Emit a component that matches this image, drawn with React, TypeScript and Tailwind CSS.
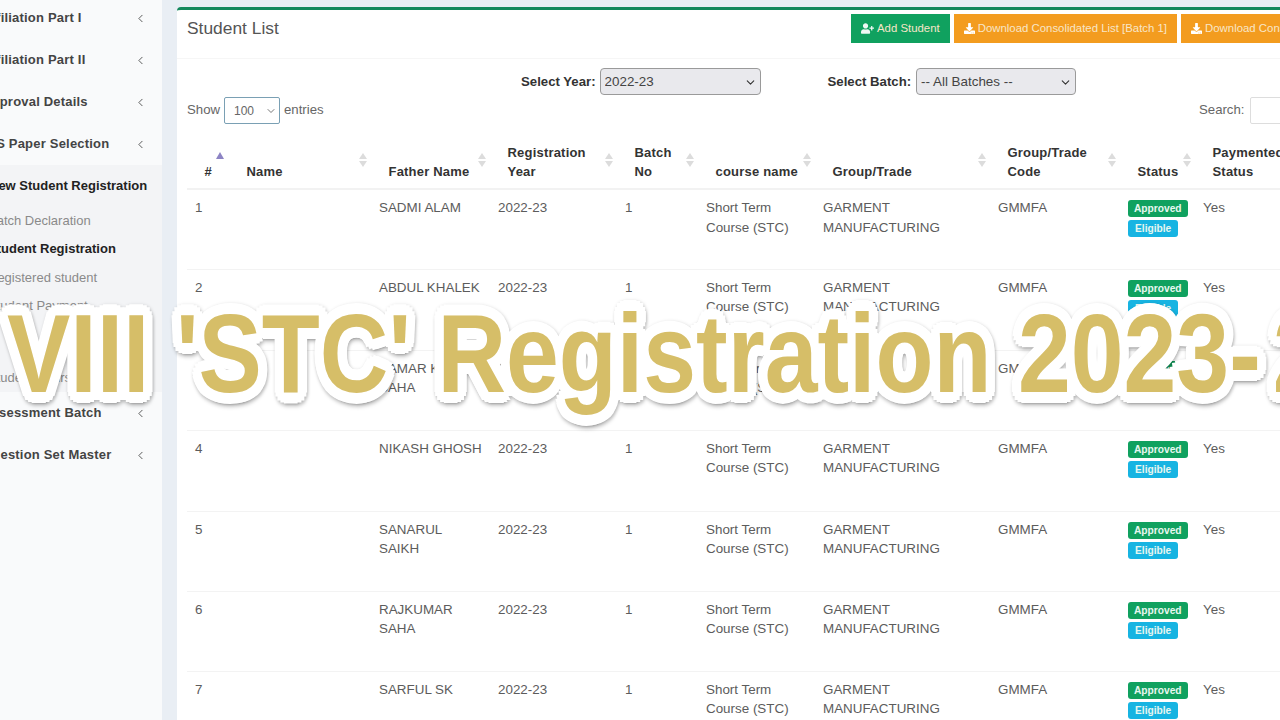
import { FaUserPlus, FaDownload } from "react-icons/fa";
import { ChevronLeft, ChevronDown } from "lucide-react";

const font = "font-['Liberation_Sans',Arial,sans-serif]";

const rows = [
  { n: 1, f: ["SADMI ALAM"], h: "h-[80px]" },
  { n: 2, f: ["ABDUL KHALEK"], h: "h-[81px]" },
  { n: 3, f: ["SAMAR KUMAR", "SAHA"], h: "h-[80px]" },
  { n: 4, f: ["NIKASH GHOSH"], h: "h-[81px]" },
  { n: 5, f: ["SANARUL", "SAIKH"], h: "h-[80px]" },
  { n: 6, f: ["RAJKUMAR", "SAHA"], h: "h-[80px]" },
  { n: 7, f: ["SARFUL SK"], h: "h-[80px]" },
];

const cols = [
  { w: "w-[42px]", t: ["#"] },
  { w: "w-[142px]", t: ["Name"], s: true },
  { w: "w-[119px]", t: ["Father Name"], s: true },
  { w: "w-[127px]", t: ["Registration", "Year"], s: true },
  { w: "w-[81px]", t: ["Batch", "No"], s: true },
  { w: "w-[117px]", t: ["course name"], s: true },
  { w: "w-[175px]", t: ["Group/Trade"], s: true },
  { w: "w-[130px]", t: ["Group/Trade", "Code"], s: true },
  { w: "w-[75px]", t: ["Status"], s: true },
  { w: "w-[110px]", t: ["Paymented", "Status"] },
];

function SortIcon() {
  return (
    <svg width="8" height="14" viewBox="0 0 8 14" className="absolute right-[4px] top-[15px]">
      <path d="M4 0 8 6H0Z" fill="#dcdcdc" />
      <path d="M4 14 8 8H0Z" fill="#dcdcdc" />
    </svg>
  );
}

function MenuItem({ label, pad }: { label: string; pad?: string }) {
  return (
    <div className="flex h-[42px] items-center justify-between pr-[15px] text-[13px] font-bold tracking-[0.2px] text-[#444]">
      <span className={`whitespace-nowrap ${pad ?? ""}`}>{label}</span>
      <ChevronLeft size={13} strokeWidth={1.6} className="shrink-0 text-[#444]" />
    </div>
  );
}

function Sidebar() {
  const sub = "flex h-[28.6px] items-center whitespace-nowrap text-[13px] text-[#8a8a8a]";
  return (
    <aside className="h-full w-[162px] shrink-0 overflow-hidden bg-[#f9fafb]">
      <div className="-mt-[3px] -ml-[18px] w-[180px]">
        <MenuItem label="Affiliation Part I" />
        <MenuItem label="Affiliation Part II" />
        <MenuItem label="Approval Details" />
        <MenuItem label="TS Paper Selection" pad="ml-[6px]" />
        <div className="h-[227px] bg-[#f3f4f6] pl-[7px]">
          <div className="flex h-[42px] items-center whitespace-nowrap text-[13px] font-bold text-[#222]">New Student Registration</div>
          <div className="-ml-[1px]">
            <div className={`${sub} mt-[-1px]`}>Batch Declaration</div>
            <div className={`${sub} font-bold text-[#222]`}>Student Registration</div>
            <div className={sub}>Registered student</div>
            <div className={sub}>Student Payment</div>
            <div className="h-[43px]" />
            <div className={sub}>Student Course</div>
          </div>
        </div>
        <MenuItem label="Assessment Batch" />
        <MenuItem label="Question Set Master" />
      </div>
    </aside>
  );
}

function Toolbar() {
  const btn = "flex h-[29px] shrink-0 items-center gap-[3px] whitespace-nowrap px-[10px] text-[11.4px] text-[#f8e6c8]";
  return (
    <div className="flex h-[49px] items-start border-b border-[#f6f6f6] pl-[10px]">
      <h1 className="mt-[5px] w-[664px] shrink-0 whitespace-nowrap text-[17.4px] text-[#555]">Student List</h1>
      <div className="mt-[4px] flex gap-[4px]">
        <div className={`${btn} bg-[#10a15f] text-[#e6f5ee]`}><FaUserPlus size={13} className="text-[#eef8f3]" /> Add Student</div>
        <div className={`${btn} bg-[#f39c1f]`}><FaDownload size={11} className="text-white" /> Download Consolidated List [Batch 1]</div>
        <div className={`${btn} bg-[#f39c1f]`}><FaDownload size={11} className="text-white" /> Download Consolidated List [Batch 2]</div>
      </div>
    </div>
  );
}

function Select({ value, w }: { value: string; w: string }) {
  return (
    <div className={`relative ${w}`}>
      <select className="h-[27px] w-full appearance-none rounded-[4px] border border-[#9a9a9a] bg-[#e9e9ed] pl-[4px] pt-[1px] text-[13.4px] text-[#444]" defaultValue={value}>
        <option>{value}</option>
      </select>
      <ChevronDown size={13} strokeWidth={2} className="pointer-events-none absolute right-[4px] top-[8px] text-[#333]" />
    </div>
  );
}

function Filters() {
  const lab = "whitespace-nowrap text-[13.2px] font-bold text-[#333]";
  return (
    <div className="flex h-[36px] items-end pl-[344px]">
      <span className={`${lab} mr-[4px] pb-[3px]`}>Select Year:</span>
      <Select value="2022-23" w="w-[161px]" />
      <span className={`${lab} ml-[67px] mr-[5px] pb-[3px]`}>Select Batch:</span>
      <Select value="-- All Batches --" w="w-[160px]" />
    </div>
  );
}

function Entries() {
  return (
    <div className="mt-[1px] flex h-[29px] items-center pl-[10px] text-[13.2px] text-[#666]">
      <div className="flex w-[1012px] shrink-0 items-center gap-[4px]">
        <span className="pb-[2px]">Show</span>
        <div className="relative w-[56px]">
          <select className="h-[27px] w-full appearance-none rounded-[2px] border border-[#7aa0b4] bg-white pl-[9px] text-[12px] text-[#666]" defaultValue="100"><option>100</option></select>
          <ChevronDown size={12} strokeWidth={1.6} className="pointer-events-none absolute right-[3px] top-[8px] text-[#555]" />
        </div>
        <span className="pb-[2px]">entries</span>
      </div>
      <div className="flex shrink-0 items-center gap-[6px]">
        <span className="pb-[2px]">Search:</span>
        <div className="h-[27px] w-[120px] shrink-0 rounded-[2px] border border-[#ddd] bg-white" />
      </div>
    </div>
  );
}

function Table() {
  const td = "px-[8px] pt-[8px] align-top";
  return (
    <table className="mt-[13px] ml-[10px] w-[1118px] table-fixed border-collapse text-[13.4px] leading-[19.6px] text-[#5c5c5c]">
      <thead>
        <tr className="h-[51px] border-b-2 border-[#f2f2f2]">
          {cols.map((c) => (
            <th key={c.t[0]} className={`${c.w} relative pb-[7px] pl-[17.5px] pr-[2px] align-bottom text-left text-[13px] font-bold leading-[19px] tracking-[0.2px] text-[#333] whitespace-nowrap`}>
              {c.t.map((l) => <div key={l}>{l}</div>)}
              {c.s && <SortIcon />}
              {c.t[0] === "#" && (
                <svg width="8" height="7" viewBox="0 0 8 7" className="absolute left-[29px] top-[14px]">
                  <path d="M4 0 8 7H0Z" fill="#8d84c4" />
                </svg>
              )}
            </th>
          ))}
        </tr>
      </thead>
      <tbody>
        {rows.map((r) => (
          <tr key={r.n} className={`${r.h} border-b border-[#f3f3f3]`}>
            <td className={td}>{r.n}</td>
            <td className={td}></td>
            <td className={td}>{r.f.map((l) => <div key={l} className="whitespace-nowrap">{l}</div>)}</td>
            <td className={td}>2022-23</td>
            <td className={td}>1</td>
            <td className={td}>Short Term<br />Course (STC)</td>
            <td className={td}>GARMENT<br />MANUFACTURING</td>
            <td className={td}>GMMFA</td>
            <td className={`${td} pt-[10px]`}>
              <div className="flex flex-col items-start gap-[3px] text-[10.2px] font-bold leading-[17px] text-[#e8f7f0]">
                <span className="rounded-[3px] bg-[#10a15f] px-[6px]">Approved</span>
                <span className="rounded-[3px] bg-[#17b4e2] px-[7px]">Eligible</span>
              </div>
            </td>
            <td className={td}>Yes</td>
          </tr>
        ))}
      </tbody>
    </table>
  );
}

export default function App() {
  return (
    <div className={`${font} relative flex h-[720px] w-[1280px] overflow-hidden bg-[#e9eef4]`}>
      <Sidebar />
      <main className="ml-[15px] mt-[7px] h-[713px] w-[1200px] shrink-0 overflow-hidden rounded-tl-[4px] border-t-[3px] border-[#14885c] bg-white">
        <Toolbar />
        <Filters />
        <Entries />
        <Table />
      </main>
      <div className="pointer-events-none absolute left-[7px] top-[290px] origin-left scale-x-[0.848] whitespace-nowrap text-[112px] font-bold leading-[128px] text-[#d6be68] [text-shadow:11px_0_0_white,10.2px_4.2px_0_white,7.8px_7.8px_0_white,4.2px_10.2px_0_white,0_11px_0_white,-4.2px_10.2px_0_white,-7.8px_7.8px_0_white,-10.2px_4.2px_0_white,-11px_0_0_white,-10.2px_-4.2px_0_white,-7.8px_-7.8px_0_white,-4.2px_-10.2px_0_white,0_-11px_0_white,4.2px_-10.2px_0_white,7.8px_-7.8px_0_white,10.2px_-4.2px_0_white,1px_11px_3px_rgba(0,0,0,0.3)] [filter:drop-shadow(1px_2px_2px_rgba(0,0,0,0.3))]">
        VIII 'STC' Registration 2023-<span className="ml-[14px]">24</span>
      </div>
    </div>
  );
}
